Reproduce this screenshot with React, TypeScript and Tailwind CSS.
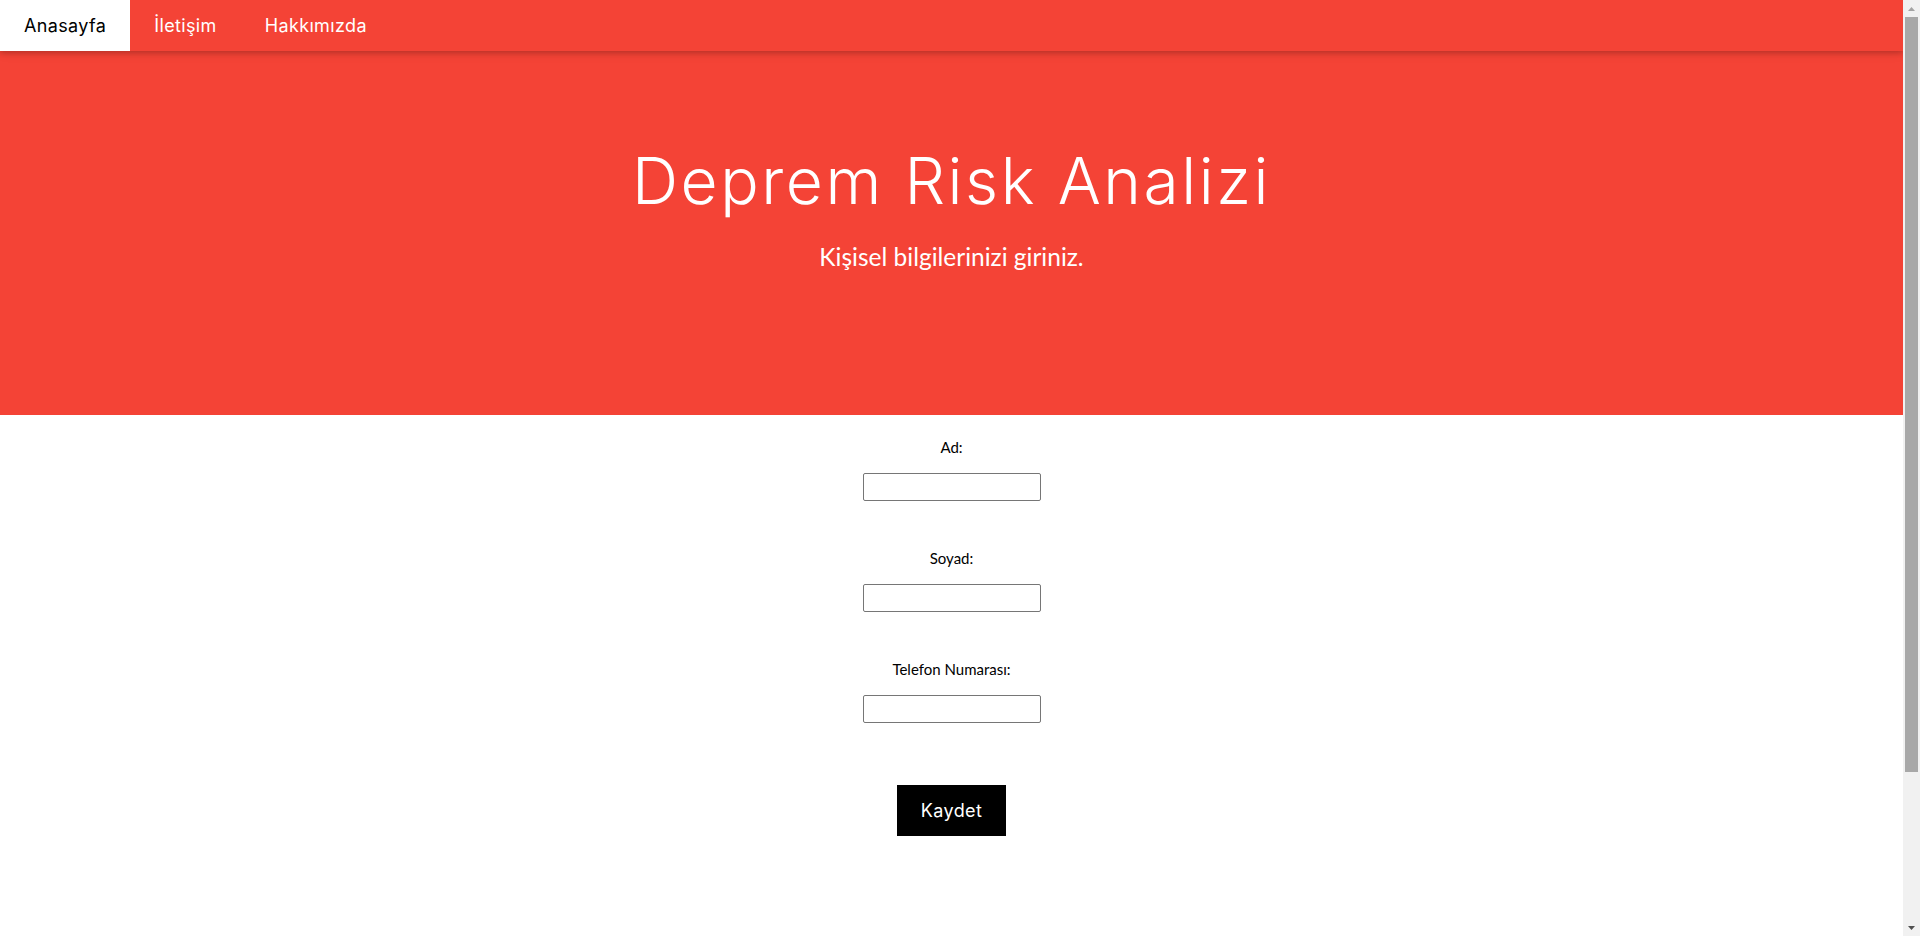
import React from "react";

const heading = { fontFamily: "Inter, 'Open Sans', sans-serif", letterSpacing: "0.04em" };
const navFont = { fontFamily: "Inter, 'Open Sans', sans-serif", letterSpacing: "0.02em" };
const body = { fontFamily: "Lato, 'Open Sans', sans-serif" };

function Field({ label }: { label: string }) {
  return (
    <div className="flex flex-col items-center">
      <label className="text-[15px] leading-[22.5px] text-black" style={body}>
        {label}
      </label>
      <input
        type="text"
        className="mt-[14.5px] w-[178px] h-[28px] border border-[#767676] rounded-[2px] bg-white px-1 text-[13px] outline-none"
      />
    </div>
  );
}

// browser scrollbar as seen in the screenshot
function Scrollbar() {
  return (
    <aside className="w-[17px] shrink-0 bg-[#f1f1f1] flex flex-col items-center">
      <div className="h-[17px] flex items-center justify-center">
        <svg width="7" height="4" viewBox="0 0 7 4">
          <path d="M3.5 0L7 4H0z" fill="#a3a3a3" />
        </svg>
      </div>
      <div className="h-[755px] w-[13px] bg-[#a8a8a8]" />
      <div className="flex-1" />
      <div className="h-[17px] flex items-center justify-center">
        <svg width="7" height="4" viewBox="0 0 7 4">
          <path d="M0 0H7L3.5 4z" fill="#505050" />
        </svg>
      </div>
    </aside>
  );
}

export default function App() {
  return (
    <div className="flex h-screen overflow-hidden bg-white">
      <main className="flex-1 min-w-0 overflow-hidden">
        {/* NAV */}
        <nav
          className="relative z-10 flex bg-[#f44336] text-[18px] leading-[27px] shadow-[0_2px_5px_0_rgba(0,0,0,0.16),0_2px_10px_0_rgba(0,0,0,0.12)]"
          style={navFont}
        >
          <a className="px-6 py-3 bg-white text-black">Anasayfa</a>
          <a className="px-6 py-3 text-white">İletişim</a>
          <a className="px-6 py-3 text-white">Hakkımızda</a>
        </nav>

        {/* HERO */}
        <header className="bg-[#f44336] text-white text-center pt-[92px] h-[364px]">
          <h1 className="text-[64px] leading-[76px] font-light" style={heading}>
            Deprem Risk Analizi
          </h1>
          <p className="mt-[20px] text-[24.5px] leading-[36px]" style={body}>
            Kişisel bilgilerinizi giriniz.
          </p>
        </header>

        {/* FORM */}
        <form className="flex flex-col items-center pt-[21px] pb-[282px]">
          <div className="flex flex-col items-center gap-[46px]">
            <Field label="Ad:" />
            <Field label="Soyad:" />
            <Field label="Telefon Numarası:" />
          </div>
          <button
            type="button"
            className="mt-[62px] bg-black text-white text-[18px] leading-[27px] px-6 py-3"
            style={navFont}
          >
            Kaydet
          </button>
        </form>
      </main>
      <Scrollbar />
    </div>
  );
}
